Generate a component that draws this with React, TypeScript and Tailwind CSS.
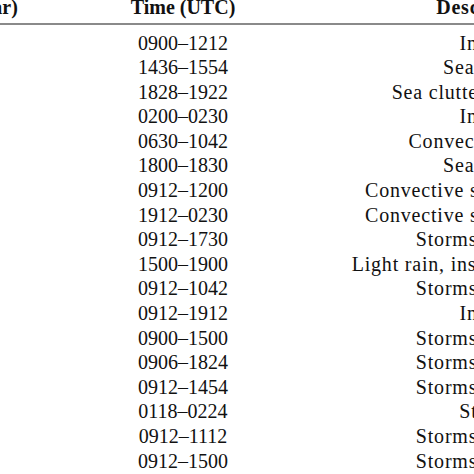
import React from "react";

const rows: { time: string; desc: string }[] = [
  { time: "0900–1212", desc: "Insects" },
  { time: "1436–1554", desc: "Sea clutter" },
  { time: "1828–1922", desc: "Sea clutter and insects" },
  { time: "0200–0230", desc: "Insects" },
  { time: "0630–1042", desc: "Convective storms" },
  { time: "1800–1830", desc: "Sea clutter" },
  { time: "0912–1200", desc: "Convective storms and birds" },
  { time: "1912–0230", desc: "Convective storms and birds" },
  { time: "0912–1730", desc: "Storms and birds" },
  { time: "1500–1900", desc: "Light rain, insects and sea echo" },
  { time: "0912–1042", desc: "Storms and birds" },
  { time: "0912–1912", desc: "Insects" },
  { time: "0900–1500", desc: "Storms and birds" },
  { time: "0906–1824", desc: "Storms and birds" },
  { time: "0912–1454", desc: "Storms and birds" },
  { time: "0118–0224", desc: "Storms" },
  { time: "0912–1112", desc: "Storms and birds" },
  { time: "0912–1500", desc: "Storms and birds" },
];

export default function App() {
  return (
    <div
      className="w-[474px] h-[474px] overflow-hidden bg-white text-[#111111] text-[20px]"
      style={{ fontFamily: '"Liberation Serif", "Times New Roman", serif' }}
    >
      <div className="ml-[-283px] w-[1014px]">
        <div className="-mt-[5px] grid grid-cols-[400px_132px_482px] font-bold leading-[24px] pb-[4px] border-b-2 border-[#8a8a8a]">
          <div className="text-center whitespace-nowrap">Date (Day/Month/Year)</div>
          <div className="text-center whitespace-nowrap">Time (UTC)</div>
          <div className="text-center whitespace-nowrap tracking-[0.8px]">Description</div>
        </div>
        <div className="pt-[5.5px] flex flex-col">
          {rows.map((r, i) => (
            <div key={i} className="grid grid-cols-[400px_132px_482px] leading-[24.6px]">
              <div />
              <div className="text-center whitespace-nowrap">{r.time}</div>
              <div className="text-center whitespace-nowrap tracking-[0.8px]">{r.desc}</div>
            </div>
          ))}
        </div>
      </div>
    </div>
  );
}
